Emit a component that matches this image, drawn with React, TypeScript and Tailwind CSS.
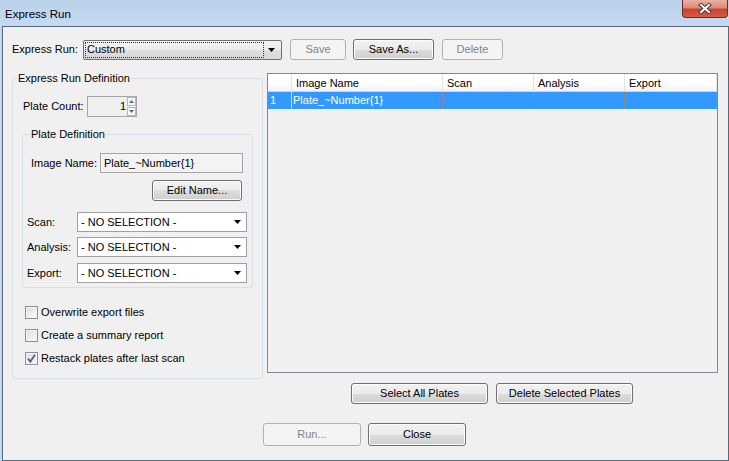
import React from "react";

const btn =
  "flex items-center justify-center rounded-[3px] border border-[#707070] bg-[linear-gradient(to_bottom,#f2f2f2_0%,#ebebeb_50%,#dddddd_50%,#cfcfcf_100%)] shadow-[inset_0_0_0_1px_#fcfcfc] text-black";
const btnDis =
  "flex items-center justify-center rounded-[3px] border border-[#adb2b5] bg-[#f4f4f4] text-[#838383]";

function Arrow() {
  return (
    <svg width="7" height="4" viewBox="0 0 7 4">
      <polygon points="0,0 7,0 3.5,4" fill="#000" />
    </svg>
  );
}

function NoSel() {
  return (
    <div className="flex h-[20px] w-[170px] items-center justify-between border border-[#a0a0a0] bg-white pl-[3px] pr-[5px]">
      <span>- NO SELECTION -</span>
      <Arrow />
    </div>
  );
}

function Check({ checked }: { checked?: boolean }) {
  return (
    <div className="relative h-[13px] w-[13px] border border-[#8f8f8f] bg-[linear-gradient(135deg,#dcdcdc,#fbfbfb)] shadow-[inset_0_0_0_1px_#f4f4f4]">
      {checked && (
        <svg className="absolute left-0 top-0" width="11" height="11" viewBox="0 0 11 11">
          <path d="M2 5.5 L4.3 8.6 L9 1.8" fill="none" stroke="#4a5f98" strokeWidth="1.8" />
        </svg>
      )}
    </div>
  );
}

export default function App() {
  return (
    <div className="flex h-[461px] w-[729px] flex-col overflow-hidden bg-[#c3d8ef] font-['Liberation_Sans',Arial,sans-serif] text-[11px] text-black">
      {/* title bar */}
      <div className="flex h-[26px] items-start justify-between bg-[linear-gradient(to_bottom,#bad1ea,#c6daf0)]">
        <span className="pl-[5px] pt-[7px] text-[11.5px] leading-[14px]">Express Run</span>
        <div className="mr-[1px] flex h-[18px] w-[46px] items-center justify-center rounded-b-[4px] border border-t-0 border-[#6e2c22] bg-[linear-gradient(to_bottom,#eab0a4_0%,#dd8b79_45%,#c8442d_55%,#d45c43_100%)]">
          <svg width="14" height="11" viewBox="0 0 14 11">
            <path d="M3 2 L11 9 M11 2 L3 9" stroke="#3c3c3c" strokeWidth="4" strokeLinecap="square" />
            <path d="M3 2 L11 9 M11 2 L3 9" stroke="#ffffff" strokeWidth="2" strokeLinecap="square" />
          </svg>
        </div>
      </div>

      {/* client */}
      <div className="ml-[2px] flex h-[435px] w-[727px] flex-col border border-[#58697e] bg-[#f0f0f0] pl-[9px] pt-[12px]">
        {/* row 1 */}
        <div className="flex h-[21px] items-center">
          <span className="w-[71px]">Express Run:</span>
          <div className="flex h-[20px] w-[199px] items-center rounded-[2px] border border-[#707070] bg-[linear-gradient(to_bottom,#f4f4f4_0%,#ececec_50%,#dfdfdf_50%,#d6d6d6_100%)] pr-[6px]">
            <div className="ml-[1px] flex h-[16px] flex-1 items-center border border-dotted border-[#333] pl-[1px]">
              Custom
            </div>
            <div className="ml-[4px]">
              <Arrow />
            </div>
          </div>
          <div className={`${btnDis} ml-[8px] h-[21px] w-[56px]`}>Save</div>
          <div className={`${btn} ml-[7px] h-[21px] w-[81px]`}>Save As...</div>
          <div className={`${btnDis} ml-[8px] h-[21px] w-[61px]`}>Delete</div>
        </div>

        {/* main */}
        <div className="mt-[12px] flex items-start">
          <fieldset className="w-[251px] rounded-[3px] border border-[#d5dfe5] pb-[12px]">
            <legend className="ml-[4px] px-[1px] leading-[13px]">Express Run Definition</legend>
            <div className="ml-[10px] mt-[11px] flex h-[21px] items-center">
              <span className="w-[64px]">Plate Count:</span>
              <div className="flex h-[21px] w-[50px] items-center border border-[#a5a5a5] bg-[#f0f0f0]">
                <span className="flex-1 pr-[1px] text-right">1</span>
                <div className="flex h-[19px] w-[9px] flex-col">
                  <div className="flex h-[9px] items-center justify-center border border-[#b8b8b8] bg-[#f6f6f6]">
                    <svg width="5" height="3" viewBox="0 0 5 3">
                      <polygon points="0,3 5,3 2.5,0" fill="#4c6ea5" />
                    </svg>
                  </div>
                  <div className="mt-[1px] flex h-[9px] items-center justify-center border border-[#b8b8b8] bg-[#f6f6f6]">
                    <svg width="5" height="3" viewBox="0 0 5 3">
                      <polygon points="0,0 5,0 2.5,3" fill="#4c6ea5" />
                    </svg>
                  </div>
                </div>
              </div>
            </div>

            <fieldset className="ml-[9px] mt-[11px] w-[231px] rounded-[3px] border border-[#d5dfe5] pb-[4px]">
              <legend className="ml-[7px] px-[1px] leading-[13px]">Plate Definition</legend>
              <div className="mt-[12px] flex items-center">
                <span className="ml-[8px] w-[69px]">Image Name:</span>
                <div className="flex h-[20px] w-[143px] items-center border border-[#a5a5a5] bg-[#f3f3f3] pl-[3px]">
                  Plate_~Number{"{1}"}
                </div>
              </div>
              <div className={`${btn} ml-[129px] mt-[7px] h-[21px] w-[90px]`}>Edit Name...</div>
              <div className="ml-[4px] mt-[11px] flex h-[20px] items-center">
                <span className="w-[50px]">Scan:</span>
                <NoSel />
              </div>
              <div className="ml-[4px] mt-[5px] flex h-[20px] items-center">
                <span className="w-[50px]">Analysis:</span>
                <NoSel />
              </div>
              <div className="ml-[4px] mt-[6px] flex h-[20px] items-center">
                <span className="w-[50px]">Export:</span>
                <NoSel />
              </div>
            </fieldset>

            <div className="ml-[12px] mt-[16px] flex h-[16px] items-center gap-[3px]">
              <Check />
              <span>Overwrite export files</span>
            </div>
            <div className="ml-[12px] mt-[7px] flex h-[16px] items-center gap-[3px]">
              <Check />
              <span>Create a summary report</span>
            </div>
            <div className="ml-[12px] mt-[7px] flex h-[16px] items-center gap-[3px]">
              <Check checked />
              <span>Restack plates after last scan</span>
            </div>
          </fieldset>

          <div className="ml-[4px] mt-[1px] flex flex-col">
            <div className="flex h-[300px] w-[451px] flex-col border border-[#828790] bg-[#f0f0f0]">
              <div className="flex h-[18px] items-center border-b border-[#d5d5d5] bg-[linear-gradient(to_bottom,#ffffff_0%,#ffffff_55%,#f1f2f4_100%)]">
                <div className="h-full w-[24px] border-r border-[#e3e3e3]" />
                <div className="flex h-full w-[151px] items-center border-r border-[#e3e3e3] pl-[4px] pt-[2px]">Image Name</div>
                <div className="flex h-full w-[91px] items-center border-r border-[#e3e3e3] pl-[4px] pt-[2px]">Scan</div>
                <div className="flex h-full w-[91px] items-center border-r border-[#e3e3e3] pl-[4px] pt-[2px]">Analysis</div>
                <div className="flex h-full flex-1 items-center border-r border-[#e3e3e3] pl-[4px] pt-[2px]">Export</div>
              </div>
              <div className="flex h-[17px] items-center bg-[#3399ff] text-white">
                <div className="flex h-full w-[24px] items-center border-r border-[#b9dcff] pl-[2px]">1</div>
                <div className="flex h-full w-[151px] items-center border-r border-[#8a8a8a] pl-[1px]">Plate_~Number{"{1}"}</div>
                <div className="h-full w-[91px] border-r border-[#8a8a8a]" />
                <div className="h-full w-[91px] border-r border-[#8a8a8a]" />
                <div className="h-full flex-1" />
              </div>
            </div>
            <div className="mt-[10px] flex">
              <div className={`${btn} ml-[84px] h-[21px] w-[137px]`}>Select All Plates</div>
              <div className={`${btn} ml-[8px] h-[21px] w-[137px]`}>Delete Selected Plates</div>
            </div>
          </div>
        </div>

        {/* bottom */}
        <div className="ml-[251px] mt-[19px] flex">
          <div className={`${btnDis} h-[23px] w-[98px]`}>Run...</div>
          <div className={`${btn} ml-[7px] h-[23px] w-[98px]`}>Close</div>
        </div>
      </div>
    </div>
  );
}
